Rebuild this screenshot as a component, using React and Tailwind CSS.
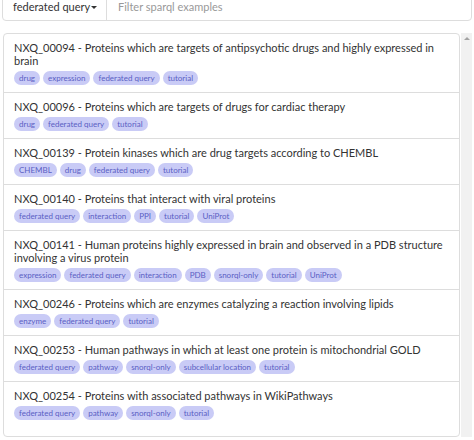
import React from 'react';

const examples = [
  {
    id: 'NXQ_00094',
    title: 'Proteins which are targets of antipsychotic drugs and highly expressed in brain',
    tags: ['drug', 'expression', 'federated query', 'tutorial'],
  },
  {
    id: 'NXQ_00096',
    title: 'Proteins which are targets of drugs for cardiac therapy',
    tags: ['drug', 'federated query', 'tutorial'],
  },
  {
    id: 'NXQ_00139',
    title: 'Protein kinases which are drug targets according to CHEMBL',
    tags: ['CHEMBL', 'drug', 'federated query', 'tutorial'],
  },
  {
    id: 'NXQ_00140',
    title: 'Proteins that interact with viral proteins',
    tags: ['federated query', 'interaction', 'PPI', 'tutorial', 'UniProt'],
  },
  {
    id: 'NXQ_00141',
    title: 'Human proteins highly expressed in brain and observed in a PDB structure involving a virus protein',
    tags: ['expression', 'federated query', 'interaction', 'PDB', 'snorql-only', 'tutorial', 'UniProt'],
  },
  {
    id: 'NXQ_00246',
    title: 'Proteins which are enzymes catalyzing a reaction involving lipids',
    tags: ['enzyme', 'federated query', 'tutorial'],
  },
  {
    id: 'NXQ_00253',
    title: 'Human pathways in which at least one protein is mitochondrial GOLD',
    tags: ['federated query', 'pathway', 'snorql-only', 'subcellular location', 'tutorial'],
  },
  {
    id: 'NXQ_00254',
    title: 'Proteins with associated pathways in WikiPathways',
    tags: ['federated query', 'pathway', 'snorql-only', 'tutorial'],
  },
];

function Tag({ label }) {
  return (
    <span className="inline-flex h-[14px] items-center rounded-full bg-[#c9cbf6] px-[5px] text-[8px] leading-none text-[#5a5fc4]">
      {label}
    </span>
  );
}

export default function App() {
  return (
    <div className="h-[440px] w-[474px] overflow-hidden bg-white font-['Lato','Liberation_Sans',sans-serif] text-[#333]">
      {/* ── Filter bar ─────────────────────────────────────────── */}
      <div className="mx-[2px] -mt-[6px] flex h-[27px] items-stretch rounded-b-[4px] border border-[#ddd] bg-white">
        <button className="flex w-[104px] items-center border-r border-[#ddd] pl-[10px] text-[11px]">
          federated query
          <span className="ml-[1px] inline-block h-0 w-0 border-x-[3px] border-t-[3.5px] border-x-transparent border-t-[#333]" />
        </button>
        <div className="flex items-center pl-[11px] text-[11px] text-[#999]">
          Filter sparql examples
        </div>
      </div>

      {/* ── Examples list + scrollbar ──────────────────────────── */}
      <div className="mt-[12px] flex pl-[3px] pr-[2px]">
        <div className="w-[458px] rounded-[4px] border border-[#ddd]">
          {examples.map((ex, i) => (
            <div
              key={ex.id}
              className={`px-[10px] pb-[7px] pt-[7px] ${i > 0 ? 'border-t border-[#ddd]' : ''}`}
            >
              <div className="text-[11px] leading-[13px]">
                {ex.id} - {ex.title}
              </div>
              <div className="mt-[4px] flex flex-wrap gap-[3px]">
                {ex.tags.map((t) => (
                  <Tag key={t} label={t} />
                ))}
              </div>
            </div>
          ))}
        </div>
        <div className="ml-[1px] flex h-[404px] w-[11px] justify-center bg-[#f1f1f1] pt-[4px]">
          <span className="inline-block h-0 w-0 border-x-[3px] border-b-[3px] border-x-transparent border-b-[#a3a3a3]" />
        </div>
      </div>
    </div>
  );
}
